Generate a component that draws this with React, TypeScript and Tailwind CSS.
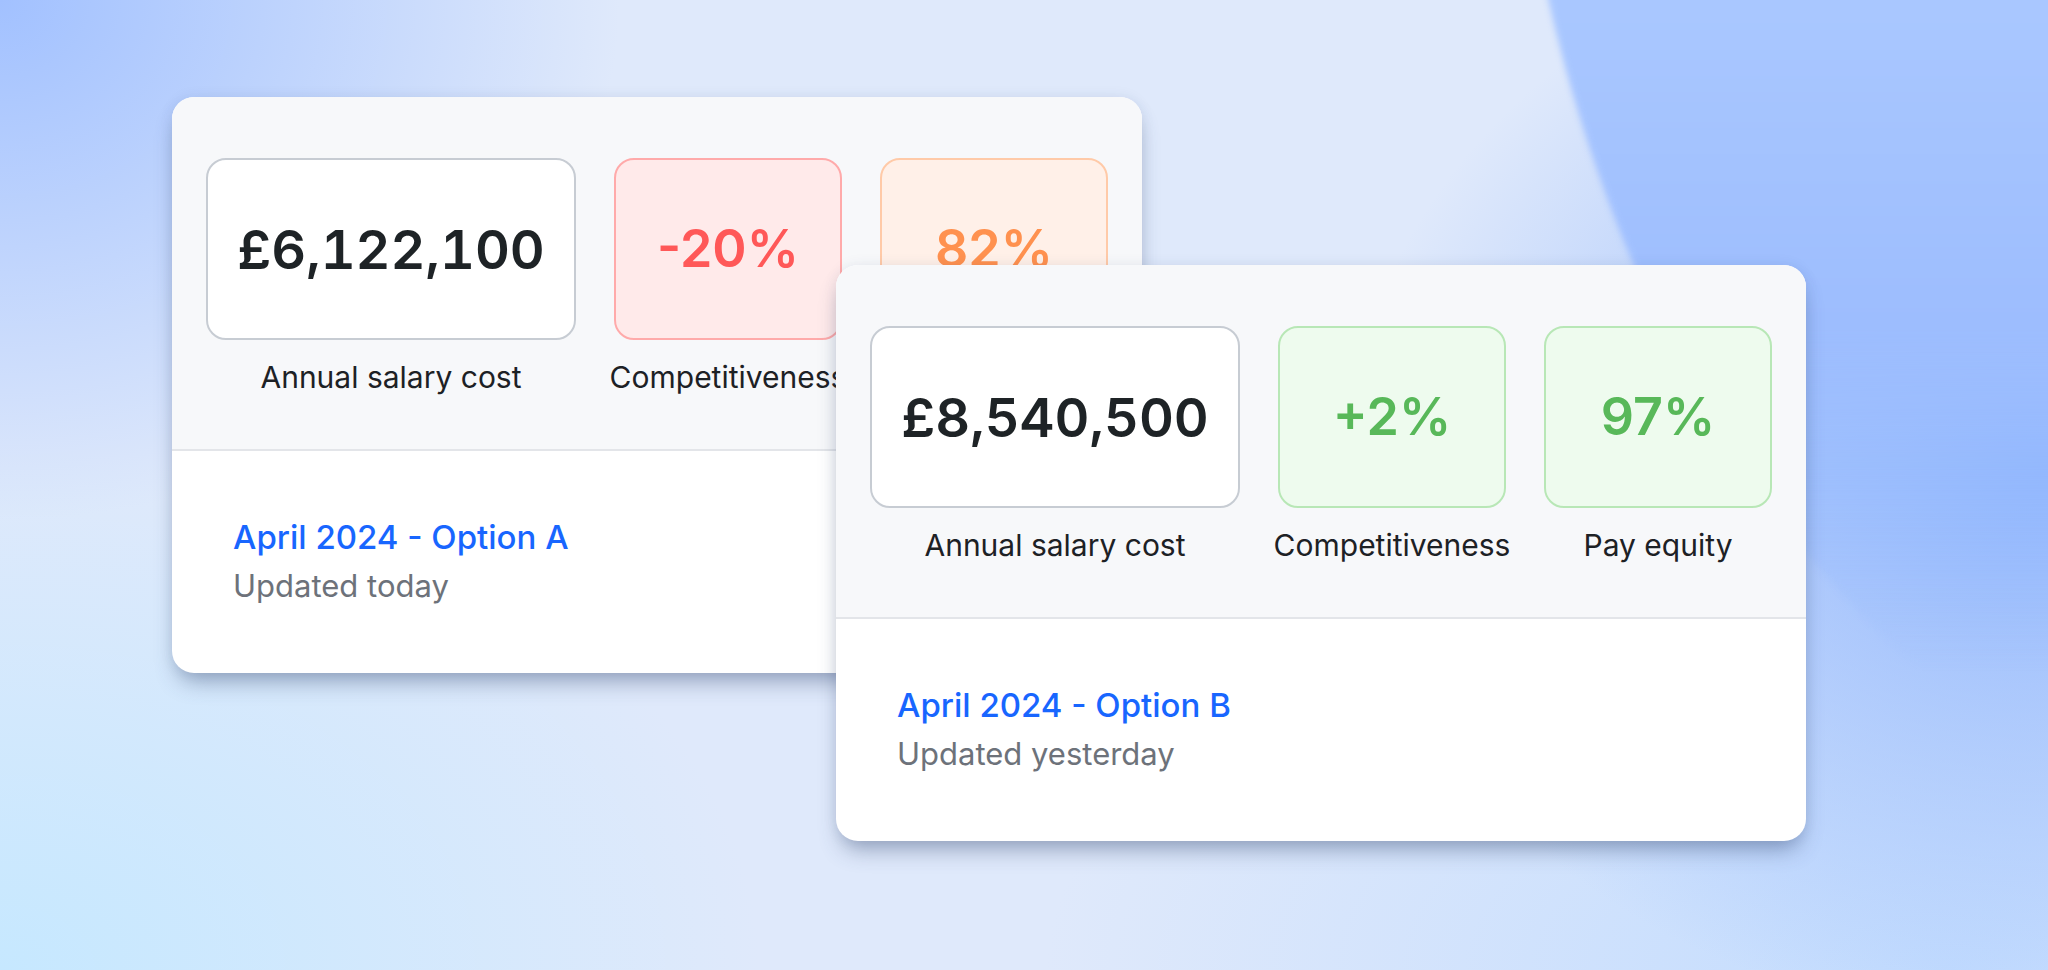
import React from "react";

type Metric = {
  value: string;
  label: string;
  tone: "neutral" | "red" | "orange" | "green";
};

type Scenario = {
  title: string;
  updated: string;
  metrics: Metric[];
};

const TONES: Record<Metric["tone"], string> = {
  neutral: "bg-white border-[#c7ccd3] text-[#1e2326] text-[54px] tabular-nums",
  red: "bg-[#ffeaea] border-[#ffaaaa] text-[#ff5858] text-[52px]",
  orange: "bg-[#fff0e8] border-[#ffcaa8] text-[#ff914f] text-[52px]",
  green: "bg-[#eefbee] border-[#b8e7b6] text-[#58b859] text-[52px]",
};

const scenarios: Scenario[] = [
  {
    title: "April 2024 - Option A",
    updated: "Updated today",
    metrics: [
      { value: "£6,122,100", label: "Annual salary cost", tone: "neutral" },
      { value: "-20%", label: "Competitiveness", tone: "red" },
      { value: "82%", label: "Pay equity", tone: "orange" },
    ],
  },
  {
    title: "April 2024 - Option B",
    updated: "Updated yesterday",
    metrics: [
      { value: "£8,540,500", label: "Annual salary cost", tone: "neutral" },
      { value: "+2%", label: "Competitiveness", tone: "green" },
      { value: "97%", label: "Pay equity", tone: "green" },
    ],
  },
];

function ScenarioCard({ scenario, className }: { scenario: Scenario; className?: string }) {
  return (
    <div
      className={
        "w-[970px] shrink-0 overflow-hidden rounded-[22px] bg-white shadow-[0_14px_22px_-6px_rgba(55,75,115,0.45),0_0_14px_rgba(40,60,100,0.08)] " +
        (className ?? "")
      }
    >
      <div className="border-b-2 border-[#e3e5e9] bg-[#f7f8fa] px-[34px] pt-[61px] pb-[54px]">
        <div className="grid grid-cols-[370px_228px_228px] gap-x-[38px]">
          {scenario.metrics.map((m) => (
            <div key={m.label} className="flex flex-col items-center">
              <div
                className={
                  "flex h-[182px] w-full items-center justify-center rounded-[20px] border-2 font-semibold " +
                  TONES[m.tone]
                }
              >
                {m.value}
              </div>
              <div className="mt-[19px] whitespace-nowrap text-[30px] leading-[36px] text-[#1d2125]">
                {m.label}
              </div>
            </div>
          ))}
        </div>
      </div>
      <div className="h-[222px] px-[61px] pt-[66px]">
        <div className="text-[33px] font-medium leading-[40px] text-[#1866ff]">{scenario.title}</div>
        <div className="mt-[10px] text-[31px] leading-[38px] text-[#6d727a]">{scenario.updated}</div>
      </div>
    </div>
  );
}

export default function App() {
  return (
    <div className="relative h-[970px] w-[2048px] overflow-hidden bg-[#dfe9fb] font-['Inter','Noto_Sans',sans-serif]">
      <div className="absolute inset-0 bg-[radial-gradient(ellipse_620px_520px_at_0%_0%,#a2c1ff_0%,rgba(162,193,255,0)_100%),radial-gradient(ellipse_760px_520px_at_0%_100%,#c6e8ff_0%,rgba(198,232,255,0)_100%),radial-gradient(ellipse_700px_560px_at_100%_48%,#8fb5fd_0%,rgba(143,181,253,0)_100%),radial-gradient(ellipse_900px_420px_at_95%_100%,#c3dcfe_0%,rgba(195,220,254,0)_100%)]" />
      <div className="absolute left-[1504px] top-[-1615px] h-[2430px] w-[1592px] rounded-[50%] bg-[linear-gradient(to_bottom,#acc9ff_0%,#aac8ff_66%,#9dbdfe_80%,rgba(150,186,254,0.6)_86%,rgba(150,186,254,0)_94%)] blur-[3px]" />

      <div className="relative flex items-start">
        <ScenarioCard scenario={scenarios[0]} className="ml-[172px] mt-[97px]" />
        <ScenarioCard scenario={scenarios[1]} className="relative -ml-[306px] mt-[265px]" />
      </div>
    </div>
  );
}
